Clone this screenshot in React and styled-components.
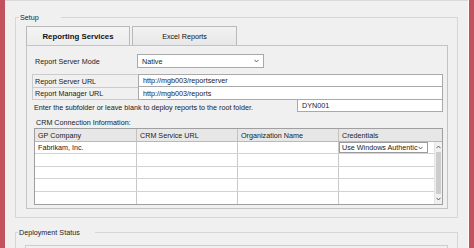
import React from "react";
import styled, { createGlobalStyle } from "styled-components";

const GlobalStyle = createGlobalStyle`
  html, body {
    margin: 0;
    padding: 0;
    background: #f0f0f0;
  }
  body {
    font-family: "Liberation Sans", Arial, sans-serif;
    font-size: 7.2px;
    color: #1b1b1b;
  }
  * {
    box-sizing: border-box;
  }
`;

const Chevron = ({ up }) => (
  <svg width="5" height="4" viewBox="0 0 5 4">
    <polyline
      points={up ? "0.5,3.2 2.5,1 4.5,3.2" : "0.5,0.8 2.5,3 4.5,0.8"}
      fill="none"
      stroke="#555"
      strokeWidth="0.9"
    />
  </svg>
);

const rows = [
  { company: "Fabrikam, Inc.", url: "", org: "", cred: "Use Windows Authentic" },
  {},
  {},
  {},
  {},
];

const App = () => {
  return (
    <Window>
      <GlobalStyle />
      <Edge />
      <Main>
        <TopStrip>
          <StripLeft />
          <StripRight />
        </TopStrip>
        <Content>
          <Group>
            <Legend>Setup</Legend>
            <TabRow>
              <Tab active>Reporting Services</Tab>
              <Tab>Excel Reports</Tab>
            </TabRow>
            <Panel>
              <ModeRow>
                <Label>Report Server Mode</Label>
                <Select>
                  <span>Native</span>
                  <Chevron />
                </Select>
              </ModeRow>

              <UrlTable>
                <LabelCell>Report Server URL</LabelCell>
                <InputCell>http://mgb003/reportserver</InputCell>
                <LabelCell>Report Manager URL</LabelCell>
                <InputCell>http://mgb003/reports</InputCell>
              </UrlTable>

              <FolderRow>
                <FolderText>
                  Enter the subfolder or leave blank to deploy reports to the root folder.
                </FolderText>
                <FolderInput>DYN001</FolderInput>
              </FolderRow>

              <SectionTitle>CRM Connection Information:</SectionTitle>

              <Grid>
                <HeaderRow>
                  <HeadCell w={102}>GP Company</HeadCell>
                  <HeadCell w={101}>CRM Service URL</HeadCell>
                  <HeadCell w={101}>Organization Name</HeadCell>
                  <HeadCell w={105} last>
                    Credentials
                  </HeadCell>
                </HeaderRow>
                <Body>
                  <Rows>
                    {rows.map((r, i) => (
                      <DataRow key={i}>
                        <Cell w={102}>{r.company}</Cell>
                        <Cell w={101}>{r.url}</Cell>
                        <Cell w={101}>{r.org}</Cell>
                        <Cell w={95} last>
                          {r.cred && (
                            <Combo>
                              <span>{r.cred}</span>
                              <Chevron />
                            </Combo>
                          )}
                        </Cell>
                      </DataRow>
                    ))}
                  </Rows>
                  <Scrollbar>
                    <ScrollBtn>
                      <Chevron up />
                    </ScrollBtn>
                    <Thumb />
                    <ScrollBtn>
                      <Chevron />
                    </ScrollBtn>
                  </Scrollbar>
                </Body>
              </Grid>
            </Panel>
          </Group>

          <Group second>
            <Legend wide>Deployment Status</Legend>
            <StatusBox />
          </Group>
        </Content>
      </Main>
      <Edge right />
    </Window>
  );
};

export default App;

const Window = styled.div`
  display: flex;
  width: 474px;
  height: 248px;
  overflow: hidden;
  background: #f0f0f0;
`;

const Edge = styled.div`
  flex-shrink: 0;
  background: #c1525e;
  border-left: ${(p) => (p.right ? "1px solid #fbfbfb" : "none")};
  width: ${(p) => (p.right ? "6px" : "5px")};
`;

const Main = styled.div`
  flex: 1;
  display: flex;
  flex-direction: column;
  min-width: 0;
`;

const TopStrip = styled.div`
  display: flex;
  height: 4px;
  border-bottom: 1px solid #dadada;
`;

const StripLeft = styled.div`
  width: 152px;
  background: #fafafa;
`;

const StripRight = styled.div`
  flex: 1;
  background: #cadcf4;
`;

const Content = styled.div`
  padding: 12px 10px 0 10px;
  display: flex;
  flex-direction: column;
`;

const Group = styled.fieldset`
  margin: ${(p) => (p.second ? "10px 0 0 0" : "0")};
  border: 1px solid #d6d6d6;
  padding: ${(p) => (p.second ? "4px 9px 0 9px" : "4px 9px 8px 10px")};
  min-width: 0;
`;

const Legend = styled.legend`
  padding: 0 ${(p) => (p.wide ? "15px" : "22px")} 0 1px;
  margin-left: -7px;
  line-height: 9px;
  color: #1b1b1b;
`;

const TabRow = styled.div`
  display: flex;
  gap: 2px;
`;

const Tab = styled.div`
  width: ${(p) => (p.active ? "104px" : "105px")};
  height: 19px;
  display: flex;
  align-items: center;
  justify-content: center;
  border: 1px solid #b9b9b9;
  border-bottom: none;
  background: ${(p) =>
    p.active ? "linear-gradient(#f4f4f4, #ececec)" : "linear-gradient(#f2f2f2, #e7e7e7)"};
  font-weight: ${(p) => (p.active ? "bold" : "normal")};
  font-size: ${(p) => (p.active ? "7.8px" : "7.2px")};
  color: #111;
`;

const Panel = styled.div`
  border: 1px solid #c3c3c3;
  height: 164px;
  padding: 8px 5px 0 5px;
  display: flex;
  flex-direction: column;
`;

const ModeRow = styled.div`
  display: flex;
  align-items: center;
  height: 14px;
`;

const Label = styled.div`
  width: 105px;
  padding-left: 3px;
`;

const Select = styled.div`
  width: 127px;
  height: 14px;
  background: #fff;
  border: 1px solid #a9a9a9;
  display: flex;
  align-items: center;
  justify-content: space-between;
  padding: 0 4px;
`;

const UrlTable = styled.div`
  margin-top: 6px;
  display: grid;
  grid-template-columns: 105px 305px;
  grid-auto-rows: 13px;
  border-left: 1px solid #cbcbcb;
`;

const LabelCell = styled.div`
  display: flex;
  align-items: center;
  padding-left: 2px;
  border-top: 1px solid #cbcbcb;
  &:nth-last-child(2) {
    border-bottom: 1px solid #cbcbcb;
  }
`;

const InputCell = styled.div`
  display: flex;
  align-items: center;
  padding-left: 4px;
  background: #fff;
  border: 1px solid #a9a9a9;
  &:nth-child(4) {
    border-top: none;
  }
`;

const FolderRow = styled.div`
  display: flex;
  align-items: center;
  justify-content: space-between;
  height: 12px;
`;

const FolderText = styled.div`
  padding-left: 2px;
  padding-top: 2px;
`;

const FolderInput = styled.div`
  width: 146px;
  height: 12px;
  background: #fff;
  border: 1px solid #a9a9a9;
  border-top: none;
  display: flex;
  align-items: center;
  padding-left: 4px;
  margin-right: -1px;
`;

const SectionTitle = styled.div`
  margin-top: 6px;
  padding-left: 4px;
  height: 9px;
`;

const Grid = styled.div`
  margin-top: 1px;
  margin-left: 2px;
  width: 409px;
  border: 1px solid #9f9f9f;
  background: #fff;
`;

const HeaderRow = styled.div`
  display: flex;
  height: 13px;
  background: #e7e7e7;
  border-bottom: 1px solid #b9b9b9;
`;

const HeadCell = styled.div`
  width: ${(p) => p.w}px;
  ${(p) => (p.last ? "flex: 1;" : "")}
  display: flex;
  align-items: center;
  padding-left: 3px;
  border-right: ${(p) => (p.last ? "none" : "1px solid #c2c2c2")};
`;

const Body = styled.div`
  display: flex;
`;

const Rows = styled.div`
  flex: 1;
  display: flex;
  flex-direction: column;
`;

const DataRow = styled.div`
  display: flex;
  height: 12.4px;
  border-bottom: 1px solid #d2d2d2;
  &:last-child {
    border-bottom: none;
  }
`;

const Cell = styled.div`
  width: ${(p) => p.w}px;
  ${(p) => (p.last ? "flex: 1;" : "")}
  display: flex;
  align-items: center;
  padding-left: ${(p) => (p.last ? "0" : "3px")};
  border-right: ${(p) => (p.last ? "none" : "1px solid #c8c8c8")};
  white-space: nowrap;
`;

const Combo = styled.div`
  width: 89px;
  height: 100%;
  border: 1px solid #9c9c9c;
  display: flex;
  align-items: center;
  justify-content: space-between;
  padding: 0 4px 0 2px;
  white-space: nowrap;
`;

const Scrollbar = styled.div`
  width: 10px;
  display: flex;
  flex-direction: column;
  background: #f0f0f0;
  border-left: 1px solid #e4e4e4;
`;

const ScrollBtn = styled.div`
  height: 10px;
  display: flex;
  align-items: center;
  justify-content: center;
`;

const Thumb = styled.div`
  flex: 1;
  margin: 0 1px;
  background: #cdcdcd;
`;

const StatusBox = styled.div`
  height: 30px;
  border: 1px solid #cdcdcd;
  margin-top: 4px;
`;
